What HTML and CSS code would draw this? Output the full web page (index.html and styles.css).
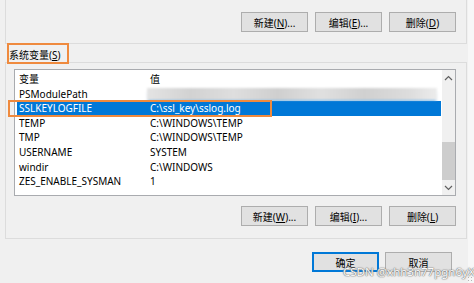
FILE: index.html
```html
<!DOCTYPE html>
<html lang="zh-CN">
<head>
    <meta charset="UTF-8">
    <title>环境变量</title>
    <link rel="stylesheet" href="styles.css">
</head>
<body>
    <div class="dialog">
        <!-- User variables (bottom part only visible) -->
        <div class="user-group">
            <div class="btn-row">
                <button class="win-btn">新建(<u>N</u>)...</button>
                <button class="win-btn">编辑(<u>E</u>)...</button>
                <button class="win-btn">删除(<u>D</u>)</button>
            </div>
        </div>

        <div class="group-label">系统变量(<u>S</u>)</div>

        <!-- System variables -->
        <div class="sys-group">
            <div class="listbox">
                <div class="list-body">
                    <div class="row head"><span class="name">变量</span><span class="value">值</span></div>
                    <div class="row"><span class="name">PSModulePath</span><span class="value"><span class="blurred"></span></span></div>
                    <div class="row selected"><span class="name">SSLKEYLOGFILE</span><span class="value">C:\ssl_key\sslog.log</span></div>
                    <div class="row"><span class="name">TEMP</span><span class="value">C:\WINDOWS\TEMP</span></div>
                    <div class="row"><span class="name">TMP</span><span class="value">C:\WINDOWS\TEMP</span></div>
                    <div class="row"><span class="name">USERNAME</span><span class="value">SYSTEM</span></div>
                    <div class="row"><span class="name">windir</span><span class="value">C:\WINDOWS</span></div>
                    <div class="row"><span class="name">ZES_ENABLE_SYSMAN</span><span class="value">1</span></div>
                </div>
                <div class="scrollbar">
                    <div class="arrow">
                        <svg width="9" height="6" viewBox="0 0 9 6"><polyline points="1,5 4.5,1.5 8,5" fill="none" stroke="#606060" stroke-width="1.2"/></svg>
                    </div>
                    <div class="track"><div class="thumb"></div></div>
                    <div class="arrow">
                        <svg width="9" height="6" viewBox="0 0 9 6"><polyline points="1,1 4.5,4.5 8,1" fill="none" stroke="#606060" stroke-width="1.2"/></svg>
                    </div>
                </div>
            </div>
            <div class="btn-row">
                <button class="win-btn">新建(<u>W</u>)...</button>
                <button class="win-btn">编辑(<u>I</u>)...</button>
                <button class="win-btn">删除(<u>L</u>)</button>
            </div>
        </div>

        <div class="dialog-footer">
            <button class="win-btn default">确定</button>
            <button class="win-btn">取消</button>
        </div>

        <!-- annotation boxes drawn over the screenshot -->
        <div class="mark mark-label"></div>
        <div class="mark mark-row"></div>

        <div class="watermark">CSDN @xhh3n77pgn6yX</div>
        <div class="grip"></div>
    </div>
</body>
</html>
```

FILE: styles.css
```css
/* Page */
body {
    margin: 0;
    background-color: #f0f0f0;
    font-family: 'Noto Sans', 'Noto Sans CJK SC', sans-serif;
    font-size: 10px;
    color: #000;
}

.dialog {
    position: relative;
    width: 474px;
    height: 283px;
    overflow: hidden;
    background: linear-gradient(to right, #f0f0f0 468px, #f7f7f7 468px);
}

/* Buttons */
.btn-row {
    display: flex;
    justify-content: flex-end;
    gap: 7px;
}

.win-btn {
    width: 67px;
    height: 20px;
    padding: 0;
    background-color: #e1e1e1;
    border: 1px solid #adadad;
    font-family: inherit;
    font-size: 10px;
    color: #000;
}

.win-btn.default {
    border-color: #0078d7;
    box-shadow: inset 0 0 0 1px #0078d7;
}

/* Top group (user variables) */
.user-group {
    box-sizing: border-box;
    width: 462px;
    height: 44px;
    margin-left: 5px;
    padding: 12px 10px 0 0;
    border: 1px solid #dcdcdc;
    border-top: none;
}

.group-label {
    height: 18px;
    padding-left: 9px;
    line-height: 22px;
}

/* System group */
.sys-group {
    box-sizing: border-box;
    width: 462px;
    height: 177px;
    margin-left: 5px;
    padding: 6px 10px 0 8px;
    border: 1px solid #dcdcdc;
}

.sys-group .btn-row {
    margin-top: 10px;
}

/* List box */
.listbox {
    display: flex;
    height: 127px;
    box-sizing: border-box;
    border: 1px solid #a9abaf;
    background-color: #fff;
}

.list-body {
    flex: 1;
    padding: 2px 1px 0 2px;
}

.row {
    display: flex;
    height: 14.6px;
    line-height: 14.6px;
    padding-left: 2px;
    white-space: nowrap;
}

.row .name {
    width: 131px;
}

.row.selected {
    background-color: #0078d7;
    color: #fff;
}

.blurred {
    display: block;
    width: 290px;
    height: 12px;
    margin: 1px 0 0 -3px;
    background: linear-gradient(to right, #e4e4e4, #d2d2d2 15%, #dedede 30%, #cfcfcf 45%, #e0e0e0 60%, #d0d0d0 75%, #dcdcdc 90%, #ececec);
    box-shadow: 0 3px 2px -1px rgba(0, 120, 215, 0.55);
    filter: blur(1.2px);
}

/* Scroll bar */
.scrollbar {
    display: flex;
    flex-direction: column;
    width: 13px;
    background-color: #f0f0f0;
}

.scrollbar .arrow {
    display: flex;
    align-items: center;
    justify-content: center;
    height: 15px;
}

.scrollbar .track {
    flex: 1;
}

.scrollbar .thumb {
    width: 13px;
    height: 38px;
    margin-top: 57px;
    background-color: #cdcdcd;
}

/* Footer */
.dialog-footer {
    display: flex;
    justify-content: flex-end;
    gap: 6px;
    padding: 13px 22px 0 0;
}

/* Orange annotation boxes */
.mark {
    position: absolute;
    box-sizing: border-box;
    border: 2px solid #ef8a3e;
}

.mark-label {
    left: 7px;
    top: 43px;
    width: 62px;
    height: 21px;
}

.mark-row {
    left: 8px;
    top: 100px;
    width: 264px;
    height: 17px;
}

/* Watermark */
.watermark {
    position: absolute;
    left: 343px;
    top: 264px;
    font-size: 11.5px;
    color: #fbfbfb;
    text-shadow: 0 0 1px #6f6f6f, 0 0 1px #6f6f6f, 0 0 2px #9a9a9a;
    white-space: nowrap;
}

.grip {
    position: absolute;
    right: 1px;
    bottom: 1px;
    width: 6px;
    height: 6px;
    background: radial-gradient(circle, #b5b5b5 0.8px, transparent 1px) 0 0 / 3px 3px;
}
```
